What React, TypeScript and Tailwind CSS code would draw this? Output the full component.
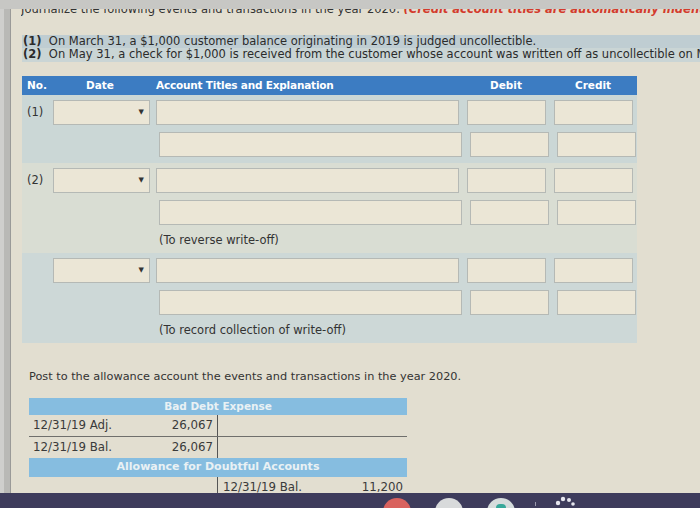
import React from "react";

const font = "font-['DejaVu_Sans',sans-serif]";

function Box({ w }: { w: string }) {
  return <div className={`${w} h-[25px] bg-[#ebe6d6] border border-[#b5b9b5]`} />;
}

function Select() {
  return (
    <div className="w-[97px] h-[25px] bg-[#ebe6d6] border border-[#b5b9b5] flex items-center justify-end pr-[5px]">
      <span className="text-[7px] text-[#333] leading-none">▼</span>
    </div>
  );
}

function EntryRow({
  label,
  note,
  tint,
}: {
  label?: string;
  note?: string;
  tint: string;
}) {
  return (
    <div className={`${tint} flex flex-col gap-[7px] pt-[5px] ${note ? "pb-[5px]" : "pb-[6px]"}`}>
      <div className="flex items-center">
        <div className="w-[31px] pl-[5px] text-[11.5px] text-[#333]">{label}</div>
        <Select />
        <div className="w-[6px]" />
        <Box w="w-[303px]" />
        <div className="w-[8px]" />
        <Box w="w-[79px]" />
        <div className="w-[8px]" />
        <Box w="w-[79px]" />
      </div>
      <div className="flex items-center">
        <div className="w-[137px]" />
        <Box w="w-[303px]" />
        <div className="w-[8px]" />
        <Box w="w-[79px]" />
        <div className="w-[8px]" />
        <Box w="w-[79px]" />
      </div>
      {note && (
        <div className="pl-[137px] text-[11.5px] leading-[16px] text-[#333]">{note}</div>
      )}
    </div>
  );
}

export default function App() {
  return (
    <div className={`w-[700px] h-[508px] overflow-hidden flex flex-col bg-[#e2ded0] ${font}`}>
      <div className="h-[9px] bg-[#c7c7c4] shrink-0" />
      <div className="flex flex-1 min-h-0">
        <div className="w-[4px] bg-[#cfcfcd]" />
        <div className="w-[6px] bg-[#b9b9b6]" />
        <div className="w-[1px] bg-[#9a9a98]" />
        <div className="flex-1 min-w-0 flex flex-col pl-[11px] [&>*]:shrink-0">
          {/* cut-off instruction line */}
          <div className="h-[11px] overflow-hidden -ml-[1px]">
            <div className="-mt-[6px] whitespace-nowrap text-[11.5px] leading-[13px] text-[#333]">
              Journalize the following events and transactions in the year 2020.{" "}
              <span className="text-[#d33b2c] font-bold italic">
                (Credit account titles are automatically indented when amount is entered.)
              </span>
            </div>
          </div>

          {/* events */}
          <div className="mt-[15px] text-[11.5px] text-[#2b2b2b] whitespace-nowrap overflow-hidden">
            <div className="bg-[#bfcdd2] h-[13px] leading-[13px] pl-[1px]">
              <span className="font-bold">(1)</span>&nbsp; On March 31, a $1,000 customer balance originating in 2019 is judged uncollectible.
            </div>
            <div className="bg-[#cad5d5] h-[14px] leading-[13px] pl-[1px]">
              <span className="font-bold">(2)</span>&nbsp; On May 31, a check for $1,000 is received from the customer whose account was written off as uncollectible on March 31.
            </div>
          </div>

          {/* journal table */}
          <div className="mt-[14px] w-[615px]">
            <div className="h-[19px] bg-[#3c7cc2] flex items-center text-[10.5px] font-bold text-white">
              <div className="w-[31px] pl-[5px]">No.</div>
              <div className="w-[94px] text-center">Date</div>
              <div className="w-[316px] pl-[9px] tracking-[-0.2px]">Account Titles and Explanation</div>
              <div className="w-[86px] text-center">Debit</div>
              <div className="w-[88px] text-center">Credit</div>
            </div>
            <EntryRow label="(1)" tint="bg-[#cbd7d6]" />
            <EntryRow label="(2)" note="(To reverse write-off)" tint="bg-[#d9ddd3]" />
            <EntryRow note="(To record collection of write-off)" tint="bg-[#cdd8d7]" />
          </div>

          {/* posting */}
          <div className="mt-[27px] pl-[7px] text-[11.3px] leading-[14px] text-[#333]">
            Post to the allowance account the events and transactions in the year 2020.
          </div>

          <div className="mt-[14px] ml-[7px] w-[378px] text-[11.8px] text-[#3a3a3a]">
            <div className="h-[17px] bg-[#86bde0] flex items-center justify-center text-[10.5px] font-bold text-[#e9f1f4]">
              Bad Debt Expense
            </div>
            <div className="flex h-[22px] border-b border-[#6f6f6c]">
              <div className="w-[188px] flex items-center justify-between px-[4px]">
                <span>12/31/19 Adj.</span>
                <span>26,067</span>
              </div>
              <div className="w-[1px] bg-[#555]" />
              <div className="flex-1" />
            </div>
            <div className="flex h-[21px]">
              <div className="w-[188px] flex items-center justify-between px-[4px]">
                <span>12/31/19 Bal.</span>
                <span>26,067</span>
              </div>
              <div className="w-[1px] bg-[#555]" />
              <div className="flex-1" />
            </div>
            <div className="h-[19px] bg-[#86bde0] flex items-center justify-center text-[11px] font-bold text-[#e9f1f4]">
              Allowance for Doubtful Accounts
            </div>
            <div className="flex h-[22px]">
              <div className="w-[188px]" />
              <div className="w-[1px] bg-[#555]" />
              <div className="flex-1 flex items-start justify-between pl-[5px] pr-[4px] pt-[3px] leading-[14px]">
                <span>12/31/19 Bal.</span>
                <span>11,200</span>
              </div>
            </div>
          </div>
        </div>
      </div>

      {/* dock bar */}
      <div className="h-[15px] shrink-0 bg-[#3e3c5c] flex items-start overflow-hidden">
        <div className="w-[383px]" />
        <div className="w-[28px] h-[28px] rounded-full bg-[#d9625e] mt-[5px]" />
        <div className="w-[24px]" />
        <div className="w-[28px] h-[28px] rounded-full bg-[#d8dadb] mt-[5px]" />
        <div className="w-[24px]" />
        <div className="w-[28px] h-[28px] rounded-full bg-[#d5dcdc] mt-[5px] flex justify-center">
          <div className="w-[10px] h-[10px] mt-[6px] bg-[#37a89a] rounded-sm" />
        </div>
        <div className="w-[20px]" />
        <div className="w-[1px] h-[4px] bg-[#9a99ad] mt-[9px]" />
        <div className="w-[18px]" />
        <svg width="22" height="15" viewBox="0 0 22 15">
          <circle cx="4" cy="10" r="2.2" fill="#e6e6ee" />
          <circle cx="9" cy="6" r="2.2" fill="#e6e6ee" />
          <circle cx="15" cy="7" r="2" fill="#e6e6ee" />
          <circle cx="19" cy="11" r="1.8" fill="#e6e6ee" />
        </svg>
      </div>
    </div>
  );
}
